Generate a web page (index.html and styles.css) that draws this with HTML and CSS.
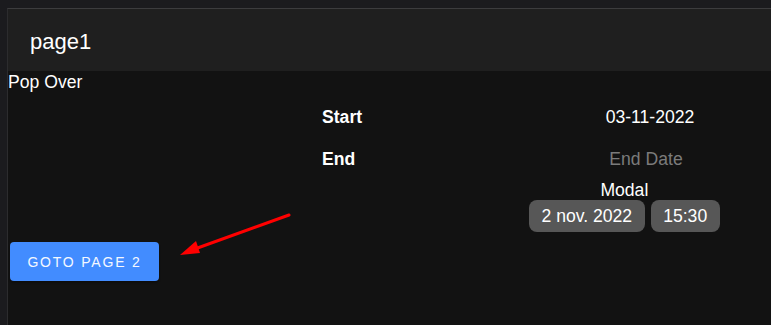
FILE: index.html
```html
<!DOCTYPE html>
<html lang="en">
<head>
    <meta charset="UTF-8">
    <meta name="viewport" content="width=device-width, initial-scale=1.0">
    <title>page1</title>
    <link rel="stylesheet" href="styles.css">
</head>
<body>
    <div class="app">
        <header class="toolbar">
            <div class="title">page1</div>
        </header>
        <main class="content">
            <div class="popover">Pop Over</div>
            <div class="form">
                <div class="label">Start</div>
                <div class="value">03-11-2022</div>
                <div class="label">End</div>
                <div class="value placeholder">End Date</div>
            </div>
            <div class="modal">
                <div class="modal-title">Modal</div>
                <div class="chips">
                    <span class="chip">2 nov. 2022</span>
                    <span class="chip">15:30</span>
                </div>
            </div>
            <button class="goto">GOTO PAGE 2</button>
            <svg class="arrow" width="771" height="325" viewBox="0 0 771 325">
                <line x1="289" y1="216" x2="192" y2="251" stroke="#ff0000" stroke-width="3" stroke-linecap="round"/>
                <polygon points="180,256 196,242 200,254" fill="#ff0000"/>
            </svg>
        </main>
    </div>
</body>
</html>
```

FILE: styles.css
```css
body {
    margin: 0;
    background: #1b1b1e;
    font-family: "Liberation Sans", Arial, sans-serif;
    color: #fff;
    height: 325px;
    overflow: hidden;
}
.app {
    margin: 8px 0 0 7px;
    border-top: 1px solid #3c3c3e;
    border-left: 1px solid #2c2c2e;
    height: 316px;
    display: flex;
    flex-direction: column;
}
.toolbar {
    height: 62px;
    background: #1f1f1f;
    display: flex;
    align-items: center;
    padding-left: 22px;
}
.title {
    font-size: 22px;
    padding-top: 4px;
}
.content {
    flex: 1;
    background: #121212;
    position: relative;
    font-size: 17.6px;
}
.popover {
    line-height: 20px;
    padding-top: 1px;
}
.form {
    display: grid;
    grid-template-columns: 207px 1fr;
    grid-auto-rows: 41.5px;
    margin: 5px 0 0 314px;
    align-items: center;
}
.label {
    font-weight: bold;
}
.value {
    text-align: center;
}
.placeholder {
    color: #7b7b7b;
    padding-right: 8px;
}
.modal {
    display: inline-flex;
    flex-direction: column;
    align-items: center;
    margin-left: 521px;
}
.modal-title {
    line-height: 20px;
}
.chips {
    display: flex;
    gap: 6px;
}
.chip {
    background: #575757;
    border-radius: 8px;
    height: 32px;
    line-height: 32px;
    padding: 0 12.5px;
}
.goto {
    display: block;
    margin: 10px 0 0 2px;
    width: 149px;
    height: 39px;
    background: #428cff;
    color: #f4f8ff;
    border: none;
    border-radius: 4px;
    font-family: "Liberation Sans", Arial, sans-serif;
    font-size: 14px;
    letter-spacing: 1.8px;
    padding: 0;
    box-shadow: 0 2px 2px rgba(0, 0, 0, 0.3);
}
.arrow {
    position: absolute;
    left: -8px;
    top: -72px;
    pointer-events: none;
}
```
